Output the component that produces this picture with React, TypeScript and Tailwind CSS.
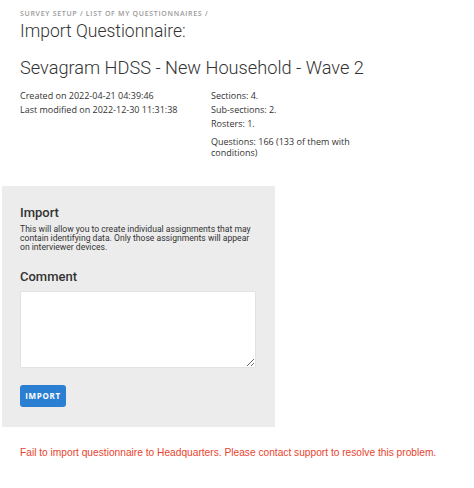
const meta = "font-['Open_Sans',sans-serif] text-[9px] leading-[14px] text-[#333]";

export default function App() {
  return (
    <div className="min-h-[488px] w-[474px] bg-white">
      <div className="px-5 pt-[9px]">
        <p className="font-['Open_Sans',sans-serif] text-[7px] font-semibold uppercase leading-[10px] tracking-[0.1em] text-[#9a9a9a]">
          Survey setup / List of my questionnaires /
        </p>
        <h1 className="font-['Roboto',sans-serif] text-[17.5px] font-light leading-[24px] text-[#333]">
          Import Questionnaire:
        </h1>
        <h2 className="mt-[13px] font-['Roboto',sans-serif] text-[18.2px] font-light leading-[24px] text-[#333]">
          Sevagram HDSS - New Household - Wave 2
        </h2>

        <div className="mt-[9px] flex">
          <div className={`w-[191px] ${meta}`}>
            <p>Created on 2022-04-21 04:39:46</p>
            <p>Last modified on 2022-12-30 11:31:38</p>
          </div>
          <div className={`w-[150px] ${meta}`}>
            <p>Sections: 4.</p>
            <p>Sub-sections: 2.</p>
            <p>Rosters: 1.</p>
            <p className="mt-[5px] leading-[11px]">Questions: 166 (133 of them with conditions)</p>
          </div>
        </div>
      </div>

      <section className="ml-[2px] mt-[28px] w-[273px] bg-[#ececec] px-[18px] pb-5 pt-[19px]">
        <h3 className="font-['Roboto',sans-serif] text-[13px] font-medium leading-[16px] text-[#333]">Import</h3>
        <p className="mt-[4px] font-['Roboto',sans-serif] text-[8.6px] leading-[9px] text-[#333]">
          This will allow you to create individual assignments that may contain identifying data. Only those
          assignments will appear on interviewer devices.
        </p>
        <h3 className="mt-[17px] font-['Roboto',sans-serif] text-[13px] font-medium leading-[16px] text-[#333]">
          Comment
        </h3>
        <textarea
          aria-label="Comment"
          className="mt-[6px] block h-[77px] w-[236px] resize-y rounded-[2px] border border-[#e2e2e2] bg-white"
        />
        <button className="mt-[17px] h-[22px] w-[46px] rounded-[3px] bg-[#2b7fd3] font-['Open_Sans',sans-serif] text-[8px] font-bold tracking-[0.08em] text-white">
          IMPORT
        </button>
      </section>

      <p className="mt-[19px] px-5 font-['Liberation_Sans',sans-serif] text-[10.2px] leading-[14px] text-[#e8432d]">
        Fail to import questionnaire to Headquarters. Please contact support to resolve this problem.
      </p>
    </div>
  );
}
